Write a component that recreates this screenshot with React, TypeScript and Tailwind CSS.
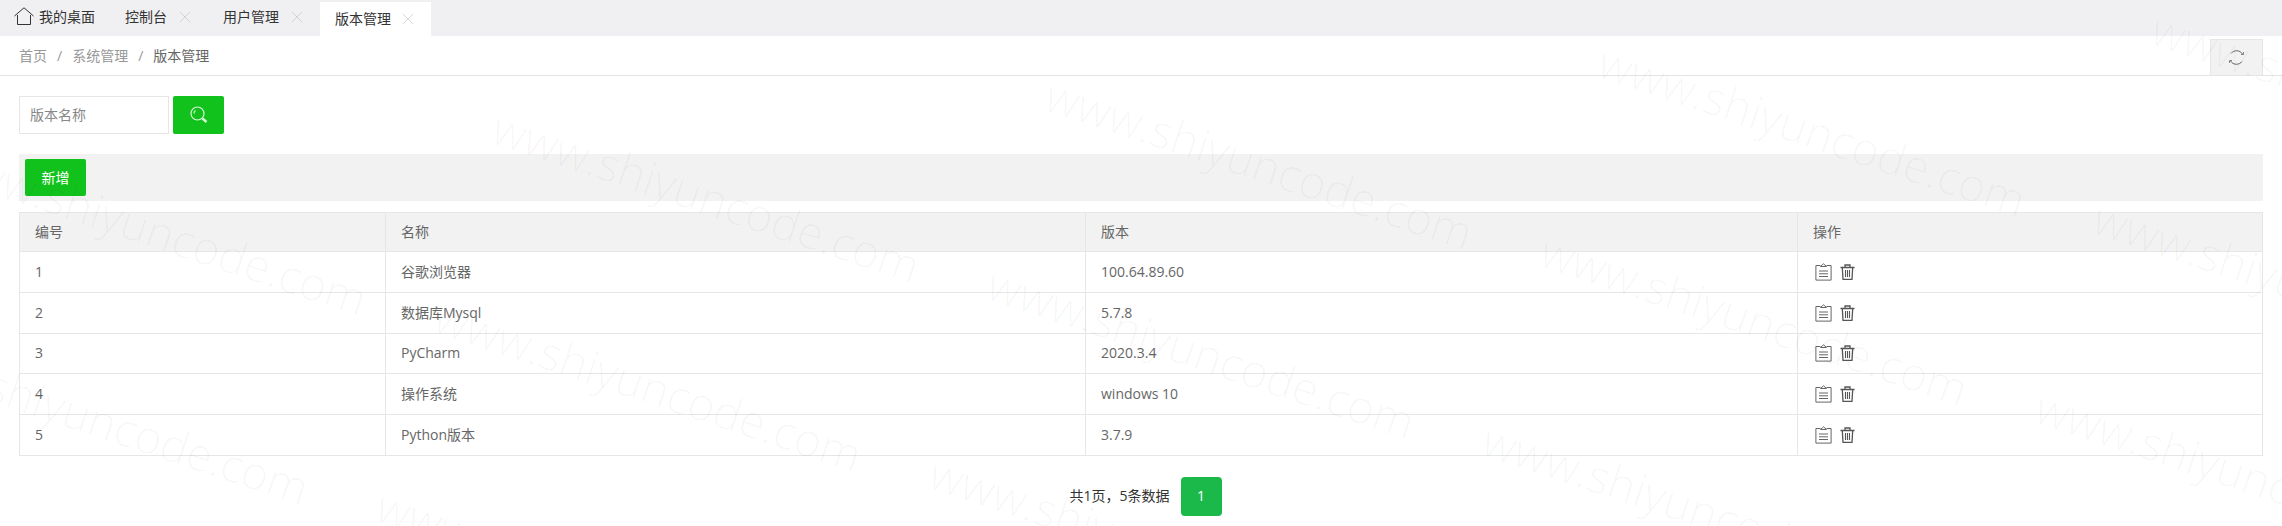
import { X } from 'lucide-react';

const tabs = [
  { name: '控制台', width: 'w-[98px]' },
  { name: '用户管理', width: 'w-[112px]' },
];

const rows = [
  { id: 1, name: '谷歌浏览器', version: '100.64.89.60' },
  { id: 2, name: '数据库Mysql', version: '5.7.8' },
  { id: 3, name: 'PyCharm', version: '2020.3.4' },
  { id: 4, name: '操作系统', version: 'windows 10' },
  { id: 5, name: 'Python版本', version: '3.7.9' },
];

// watermark grid, start of each text in page pixels
const marks: { x: number; y: number }[] = [];
for (let j = 0; j < 3; j++) {
  for (let i = -3; i < 4; i++) {
    const x = 1055 + i * 553 - j * 58;
    const y = 95 - i * 33 + j * 189;
    if (x < 2282 && x > -450 && y < 526) marks.push({ x, y });
  }
}

const HomeIcon = () => (
  <svg width="20" height="18" viewBox="0 0 20 18" fill="none" stroke="#333" strokeWidth="1" className="mr-[5px] -mt-[3px]">
    <path d="M.5 9 10 .8 19.500 9" />
    <path d="M3.500 8v9.500h13V8" />
  </svg>
);

const SearchIcon = () => (
  <svg width="20" height="20" viewBox="0 0 20 20" fill="none" stroke="#d9f7da" strokeWidth="1.2">
    <circle cx="8.5" cy="8.5" r="6.5" />
    <path d="M5 8.5a3.5 3.5 0 0 1 1.5-3" />
    <path d="M13.5 13.5l4 3.5" strokeWidth="2.4" />
  </svg>
);

const RefreshIcon = () => (
  <svg width="17" height="17" viewBox="0 0 17 17" fill="none" stroke="#666" strokeWidth="1">
    <path d="M3 4.500A7 7 0 0 1 14.500 5" />
    <path d="M14 12.500A7 7 0 0 1 2.500 12" />
    <path d="M13 5.500h2.500V3M4 11.500H1.500V14" strokeWidth="0.8" />
  </svg>
);

const NoteIcon = () => (
  <svg width="17" height="18" viewBox="0 0 17 18" fill="none" stroke="#666" strokeWidth="1">
    <path d="M5.500 2.500H.9v14.600h15.200V2.500h-4.600" />
    <path d="M5.500 3.500 8.500 .8l3 2.700z" />
    <path d="M4 8h9M4 10.800h9M4 13.500h9" />
  </svg>
);

const TrashIcon = () => (
  <svg width="15" height="16" viewBox="0 0 15 16" fill="none" stroke="#555" strokeWidth="1.300">
    <path d="M.5 3.500h14M5 3.300V1h5v2.300" />
    <path d="M2.300 3.500l.7 11.800h9l.7-11.800" />
    <path d="M5.500 6v7M7.500 6v7M9.500 6v7" strokeWidth="1.100" />
  </svg>
);

const App = () => {
  return (
    <div className="relative h-[526px] w-full overflow-hidden bg-white text-sm text-[#666] font-['Open_Sans','Noto_Sans_CJK_SC',sans-serif]">
      {/* Tabs */}
      <div className="flex h-9 items-end bg-[#f0f0f2]">
        <div className="flex h-[34px] w-[110px] items-center pl-[14px] pb-[4px] text-[#333]">
          <HomeIcon />
          我的桌面
        </div>
        {tabs.map((tab) => (
          <div key={tab.name} className={`flex h-[34px] items-center pb-[4px] pl-[15px] text-[#333] ${tab.width}`}>
            {tab.name}
            <X size={20} strokeWidth={0.8} className="ml-[8px] text-[#c4c4c4]" />
          </div>
        ))}
        <div className="-mb-[1px] flex h-[35px] w-[111px] items-center bg-white pb-[2px] pl-[15px] text-[#333]">
          版本管理
          <X size={20} strokeWidth={0.8} className="ml-[7px] text-[#c4c4c4]" />
        </div>
      </div>

      {/* Breadcrumb */}
      <div className="flex h-10 items-center justify-between border-b border-[#e4e4e4] pl-[19px] pr-[19px]">
        <div className="flex items-center text-[#999]">
          <span>首页</span>
          <span className="mx-[10px]">/</span>
          <span>系统管理</span>
          <span className="mx-[10px]">/</span>
          <span className="text-[#666]">版本管理</span>
        </div>
        <div className="flex h-9 w-[53px] items-center justify-center self-end border border-b-0 border-[#e6e6e6] bg-[#f2f2f2]">
          <RefreshIcon />
        </div>
      </div>

      <div className="px-[19px]">
        {/* Search */}
        <div className="mt-5 flex gap-[4px]">
          <div className="flex h-[38px] w-[150px] items-center border border-[#e6e6e6] pl-[10px] text-[#888]">版本名称</div>
          <div className="flex h-[38px] w-[51px] items-center justify-center rounded-[2px] bg-[#12c21c]">
            <SearchIcon />
          </div>
        </div>

        {/* Toolbar */}
        <div className="mt-[20px] flex h-[47px] items-center bg-[#f2f2f2] pl-[6px]">
          <div className="flex h-[37px] w-[61px] items-center justify-center rounded-[2px] bg-[#12c21c] text-white">新增</div>
        </div>

        {/* Table */}
        <table className="mt-[11px] w-full table-fixed border-collapse border border-[#e6e6e6]">
          <colgroup>
            <col className="w-[366px]" />
            <col className="w-[700px]" />
            <col className="w-[712px]" />
            <col />
          </colgroup>
          <thead>
            <tr className="h-[39px] bg-[#f2f2f2]">
              {['编号', '名称', '版本', '操作'].map((title) => (
                <th key={title} className="border border-[#e6e6e6] px-[15px] text-left font-normal">{title}</th>
              ))}
            </tr>
          </thead>
          <tbody>
            {rows.map((row) => (
              <tr key={row.id} className="h-[40.8px]">
                <td className="border border-[#e6e6e6] px-[15px]">{row.id}</td>
                <td className="border border-[#e6e6e6] px-[15px]">{row.name}</td>
                <td className="border border-[#e6e6e6] px-[15px]">{row.version}</td>
                <td className="border border-[#e6e6e6] px-[15px]">
                  <div className="flex items-center gap-[8px] pl-[2px]">
                    <NoteIcon />
                    <TrashIcon />
                  </div>
                </td>
              </tr>
            ))}
          </tbody>
        </table>

        {/* Pagination */}
        <div className="mt-[21px] flex items-center justify-center gap-[11px] pl-[9px]">
          <span className="text-[#333]">共1页，5条数据</span>
          <span className="flex h-[39px] w-[41px] items-center justify-center rounded bg-[#1bb84a] text-white">1</span>
        </div>
      </div>

      {/* Watermark */}
      {marks.map((m) => (
        <div
          key={`${m.x}-${m.y}`}
          className="pointer-events-none absolute origin-top-left rotate-[18.500deg] whitespace-nowrap font-['Open_Sans',sans-serif] text-[46px] leading-none font-light text-black/[.035]"
          style={{ left: m.x, top: m.y - 25 }}
        >
          www.shiyuncode.com
        </div>
      ))}
    </div>
  );
};

export default App;
